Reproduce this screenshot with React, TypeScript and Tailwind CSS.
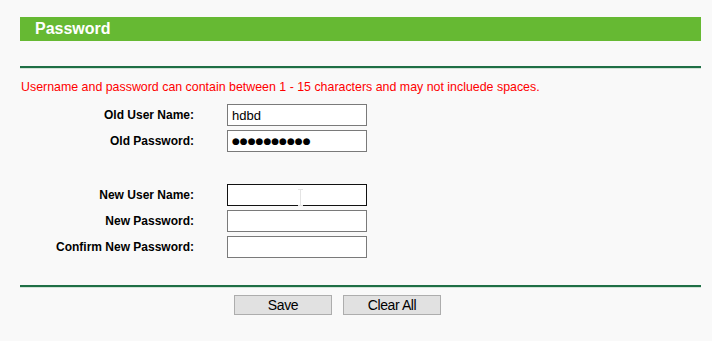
import React from 'react'

const rows = [
  { label: 'Old User Name:', value: 'hdbd' },
  { label: 'Old Password:', value: '●●●●●●●●●●', secret: true },
]

const newRows = [
  { label: 'New User Name:', focused: true },
  { label: 'New Password:' },
  { label: 'Confirm New Password:' },
]

function FieldRow({
  label,
  value,
  secret,
  focused,
}: {
  label: string
  value?: string
  secret?: boolean
  focused?: boolean
}) {
  return (
    <div className="flex items-center h-[22px]">
      <div className="w-[174px] text-right font-bold text-[12px] text-black leading-none">
        {label}
      </div>
      <div
        className={
          'relative ml-[33px] w-[140px] h-[22px] bg-white border flex items-center pl-[4px] ' +
          (focused ? 'border-[#111111]' : 'border-[#7a7a7a]')
        }
      >
        {secret ? (
          <span className="text-[9px] tracking-[0px] text-black font-['DejaVu_Sans',sans-serif] leading-none">
            {value}
          </span>
        ) : (
          <span className="text-[13px] text-black leading-none">{value}</span>
        )}
        {focused && (
          <svg
            className="absolute left-[69px] top-[4px]"
            width="7"
            height="17"
            viewBox="0 0 7 17"
          >
            <path d="M1 0.5h5M3.5 0.5v16M1 16.5h5" stroke="#e4e4e4" strokeWidth="1" fill="none" />
          </svg>
        )}
      </div>
    </div>
  )
}

export default function App() {
  return (
    <div className="w-[712px] h-[341px] bg-[#f9f9f9] pt-[17px] pl-5 font-['Liberation_Sans',Arial,sans-serif] overflow-hidden">
      <div className="w-[681px] h-6 bg-[#66b933] pl-[15px] flex items-center text-white font-bold text-[16px]">
        Password
      </div>

      <div className="mt-[25px] w-[681px]">
        <div className="h-[2px] bg-[#1f6f45]" />
        <div className="h-px bg-[#d3e3d8]" />
      </div>

      <p className="mt-[11px] ml-px text-[12.4px] leading-[14px] text-[#ff0000]">
        Username and password can contain between 1 - 15 characters and may not incluede spaces.
      </p>

      <div className="mt-[10px] flex flex-col gap-1">
        {rows.map((r) => (
          <FieldRow key={r.label} {...r} />
        ))}
      </div>

      <div className="mt-8 flex flex-col gap-1">
        {newRows.map((r) => (
          <FieldRow key={r.label} {...r} />
        ))}
      </div>

      <div className="mt-[27px] w-[681px]">
        <div className="h-[2px] bg-[#1f6f45]" />
        <div className="h-px bg-[#d3e3d8]" />
      </div>

      <div className="mt-[7px] ml-[214px] flex gap-[11px]">
        <button className="w-[98px] h-5 bg-[#e1e1e1] border border-[#adadad] text-[14px] tracking-[-0.4px] text-black leading-none">
          Save
        </button>
        <button className="w-[98px] h-5 bg-[#e1e1e1] border border-[#adadad] text-[14px] tracking-[-0.4px] text-black leading-none">
          Clear All
        </button>
      </div>
    </div>
  )
}
